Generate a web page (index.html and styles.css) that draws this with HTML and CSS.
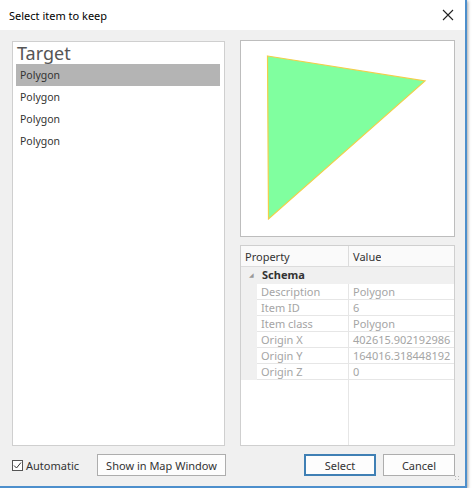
FILE: index.html
```html
<!DOCTYPE html>
<html lang="en">
<head>
  <meta charset="UTF-8">
  <title>Select item to keep</title>
  <link rel="stylesheet" href="styles.css">
</head>
<body>
  <div class="dialog">
    <div class="titlebar">
      <span class="title">Select item to keep</span>
      <svg class="close" width="12" height="12" viewBox="0 0 12 12">
        <path d="M1 1 L11 11 M11 1 L1 11" stroke="#222" stroke-width="1.1" fill="none"/>
      </svg>
    </div>

    <div class="content">
      <div class="panes">
        <div class="list">
          <div class="list-title">Target</div>
          <div class="list-item selected">Polygon</div>
          <div class="list-item">Polygon</div>
          <div class="list-item">Polygon</div>
          <div class="list-item">Polygon</div>
        </div>

        <div class="right">
          <div class="preview">
            <svg width="213" height="195" viewBox="0 0 213 195">
              <polygon points="26.5,15 184,40 27.5,178" fill="#80ff9f" stroke="#f2cf4a" stroke-width="1.2"/>
            </svg>
          </div>

          <div class="grid">
            <div class="grid-row grid-head">
              <div class="cell name">Property</div>
              <div class="cell value">Value</div>
            </div>
            <div class="grid-row category">
              <span class="expander">&#9698;</span>
              <span class="cat-name">Schema</span>
            </div>
            <div class="grid-row prop">
              <div class="margin"></div>
              <div class="cell name">Description</div>
              <div class="cell value">Polygon</div>
            </div>
            <div class="grid-row prop">
              <div class="margin"></div>
              <div class="cell name">Item ID</div>
              <div class="cell value">6</div>
            </div>
            <div class="grid-row prop">
              <div class="margin"></div>
              <div class="cell name">Item class</div>
              <div class="cell value">Polygon</div>
            </div>
            <div class="grid-row prop">
              <div class="margin"></div>
              <div class="cell name">Origin X</div>
              <div class="cell value">402615.902192986</div>
            </div>
            <div class="grid-row prop">
              <div class="margin"></div>
              <div class="cell name">Origin Y</div>
              <div class="cell value">164016.318448192</div>
            </div>
            <div class="grid-row prop">
              <div class="margin"></div>
              <div class="cell name">Origin Z</div>
              <div class="cell value">0</div>
            </div>
            <div class="grid-fill">
              <div class="fill-name"></div>
              <div class="fill-value"></div>
            </div>
          </div>
        </div>
      </div>

      <div class="footer">
        <label class="check">
          <span class="box">
            <svg width="9" height="9" viewBox="0 0 9 9">
              <path d="M1 4.5 L3.5 7 L8 1.5" stroke="#333" stroke-width="1" fill="none"/>
            </svg>
          </span>
          Automatic
        </label>
        <button class="btn map-btn">Show in Map Window</button>
        <div class="spacer"></div>
        <button class="btn default">Select</button>
        <button class="btn">Cancel</button>
      </div>
      <div class="grip"></div>
    </div>
  </div>
</body>
</html>
```

FILE: styles.css
```css
body {
  margin: 0;
  background: #ffffff;
  font-family: 'Noto Sans', 'Open Sans', sans-serif;
  font-size: 11px;
  color: #333;
}

.dialog {
  width: 465px;
  height: 486px;
  display: flex;
  flex-direction: column;
  border-right: 2px solid #4d8fcc;
  border-bottom: 2px solid #4d8fcc;
  box-shadow: 1px 1px 3px rgba(0, 0, 0, 0.35);
  position: relative;
}

/* Title bar */
.titlebar {
  height: 30px;
  flex: none;
  display: flex;
  align-items: center;
  justify-content: space-between;
  padding: 0 9px 0 9px;
  background: #ffffff;
}

.title {
  font-size: 11px;
  color: #000;
}

.close {
  margin-right: 2px;
}

/* Body */
.content {
  flex: 1;
  display: flex;
  flex-direction: column;
  padding: 10px 10px 10px 12px;
  background: #f0f0f0;
}

.panes {
  display: flex;
  gap: 15px;
  height: 406px;
}

.list {
  width: 212px;
  margin-top: 1px;
  border: 1px solid #cfcfcf;
  background: #fff;
  padding: 1px 4px 0 3px;
}

.list-title {
  font-size: 18px;
  line-height: 21px;
  color: #555;
  padding-left: 1px;
}

.list-item {
  height: 22px;
  line-height: 22px;
  padding-left: 4px;
  color: #333;
  font-size: 10.5px;
}

.list-item.selected {
  background: #b4b4b4;
}

.right {
  width: 215px;
  display: flex;
  flex-direction: column;
  gap: 8px;
}

.preview {
  height: 197px;
  box-sizing: border-box;
  border: 1px solid #bdbdbd;
  background: #fff;
}

.preview svg {
  display: block;
}

/* Property grid */
.grid {
  flex: 1;
  display: flex;
  flex-direction: column;
  border: 1px solid #cfcfcf;
  background: #fff;
}

.grid-row {
  display: flex;
  height: 16px;
  line-height: 16px;
}

.cell {
  padding-left: 4px;
  white-space: nowrap;
  overflow: hidden;
}

.grid-head {
  height: 20px;
  line-height: 21px;
  background: #fafafa;
  border-bottom: 1px solid #dcdcdc;
  color: #333;
}

.grid-head .name {
  width: 103px;
  border-right: 1px solid #dcdcdc;
}

.category {
  background: #f0f0f0;
  border-bottom: 1px solid #f0f0f0;
}

.expander {
  width: 21px;
  font-size: 6px;
  color: #999;
  text-align: center;
}

.cat-name {
  font-weight: bold;
  color: #333;
}

.prop {
  color: #a5a5a5;
}

.prop .margin {
  width: 16px;
  background: #f0f0f0;
}

.prop .name {
  width: 87px;
  border-right: 1px solid #e6e6e6;
  border-bottom: 1px solid #e6e6e6;
}

.prop .value {
  flex: 1;
  border-bottom: 1px solid #e6e6e6;
}

.grid-fill {
  flex: 1;
  display: flex;
}

.fill-name {
  width: 107px;
  border-right: 1px solid #e6e6e6;
}

/* Footer */
.footer {
  margin-top: 8px;
  height: 22px;
  display: flex;
  align-items: center;
}

.check {
  display: flex;
  align-items: center;
  gap: 3px;
  width: 85px;
  color: #333;
}

.box {
  width: 9px;
  height: 9px;
  border: 1px solid #555;
  background: #fff;
  display: flex;
}

.spacer {
  flex: 1;
}

.btn {
  height: 22px;
  width: 72px;
  border: 1px solid #adadad;
  background: #fdfdfd;
  font-family: inherit;
  font-size: 11px;
  color: #333;
  padding: 0;
}

.map-btn {
  width: 129px;
}

.btn.default {
  border: 2px solid #3f7fb4;
  margin-right: 7px;
}

.grip {
  position: absolute;
  right: 4px;
  bottom: 4px;
  width: 7px;
  height: 7px;
  background: radial-gradient(circle, #b8b8b8 0.8px, transparent 1px) 0 0 / 3px 3px;
}
```
